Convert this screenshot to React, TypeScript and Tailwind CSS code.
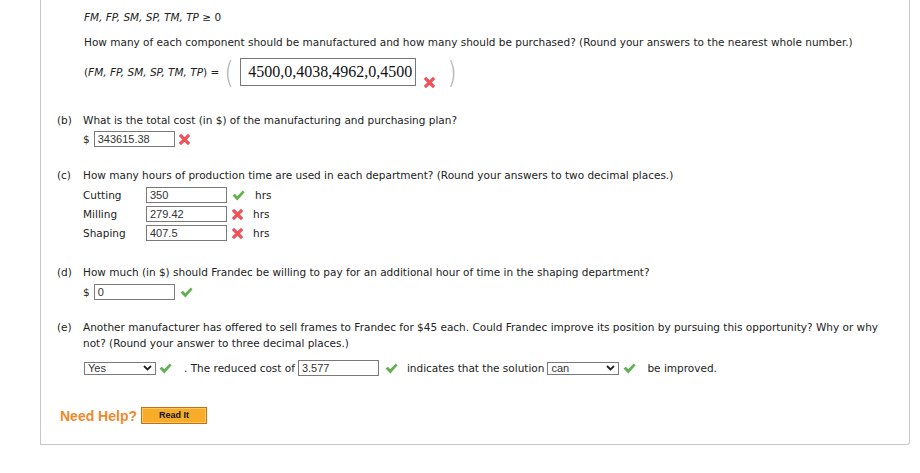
import React from "react";

const Check = () => (
    <svg width="13" height="11" viewBox="0 0 13 11" className="shrink-0">
        <path d="M0.5 5.6 L3 3.8 L5.2 6.2 L10.8 0.5 L12.6 2.2 L5.4 10.4 Z" fill="#62b04e" />
    </svg>
);

const Cross = () => (
    <svg width="11" height="11" viewBox="0 0 11 11" className="shrink-0">
        <path d="M2 2 L9 9 M9 2 L2 9" stroke="#f0525a" strokeWidth="3.2" strokeLinecap="square" />
    </svg>
);

const Field = ({ value, w = "w-[81px]" }: { value: string; w?: string }) => (
    <div className={`${w} h-[16px] border border-[#7a7a7a] bg-white px-[3px] text-[11px] leading-[14px] text-[#333] font-['Liberation_Sans',Arial,sans-serif]`}>
        {value}
    </div>
);

const Select = ({ value, w }: { value: string; w: string }) => (
    <div className={`${w} h-[13px] border border-[#7a7a7a] bg-white flex items-center justify-between pl-[3px] pr-[3px] text-[11px] leading-[11px] text-[#333] font-['Liberation_Sans',Arial,sans-serif]`}>
        <span>{value}</span>
        <svg width="9" height="6" viewBox="0 0 9 6">
            <path d="M1 1 L4.5 4.5 L8 1" stroke="#222" strokeWidth="1.8" fill="none" />
        </svg>
    </div>
);

const Part = ({ label, children }: { label: string; children: React.ReactNode }) => (
    <div className="flex">
        <div className="w-[26px] shrink-0">{label}</div>
        <div>{children}</div>
    </div>
);

export default function App() {
    return (
        <div className="w-[920px] h-[473px] bg-white pl-[40px] pr-[10px] font-['DejaVu_Sans',Verdana,sans-serif] text-[10.5px] leading-[16px] text-[#222]">
            <div className="h-[445px] border-l border-r border-b border-[#c8c8c8] rounded-br-[3px] pl-[16px] flex flex-col">
                <div className="pl-[27px] pt-[9px]">
                    <span className="italic">FM, FP, SM, SP, TM, TP</span> ≥ 0
                </div>
                <div className="pl-[27px] mt-[9px]">
                    How many of each component should be manufactured and how many should be purchased? (Round your answers to the nearest whole number.)
                </div>
                <div className="pl-[27px] mt-[7px] flex items-center h-[30px]">
                    <span>
                        (<span className="italic">FM, FP, SM, SP, TM, TP</span>) =
                    </span>
                    <span className="ml-[4px] text-[31px] leading-[30px] text-[#aaa] font-['DejaVu_Sans',sans-serif] font-extralight scale-x-75">(</span>
                    <div className="ml-[5px] w-[176px] h-[28px] border border-[#777] flex items-center pl-[7px] text-[16px] font-['Liberation_Serif',serif] text-[#111]">
                        4500,0,4038,4962,0,4500
                    </div>
                    <div className="ml-[8px] mt-[20px]">
                        <Cross />
                    </div>
                    <span className="ml-[11px] text-[31px] leading-[30px] text-[#aaa] font-['DejaVu_Sans',sans-serif] font-extralight scale-x-75">)</span>
                </div>

                <div className="mt-[25px]">
                    <Part label="(b)">
                        What is the total cost (in $) of the manufacturing and purchasing plan?
                        <div className="flex items-center gap-[4px] mt-[3px]">
                            <span>$</span>
                            <Field value="343615.38" />
                            <Cross />
                        </div>
                    </Part>
                </div>

                <div className="mt-[20px]">
                    <Part label="(c)">
                        How many hours of production time are used in each department? (Round your answers to two decimal places.)
                        <div className="grid grid-cols-[63px_81px_24px_auto] items-center gap-y-[3px] mt-[4px]">
                            <span>Cutting</span>
                            <Field value="350" />
                            <div className="pl-[5px]"><Check /></div>
                            <span className="pl-[4px]">hrs</span>
                            <span>Milling</span>
                            <Field value="279.42" />
                            <div className="pl-[5px]"><Cross /></div>
                            <span className="pl-[2px]">hrs</span>
                            <span>Shaping</span>
                            <Field value="407.5" />
                            <div className="pl-[5px]"><Cross /></div>
                            <span className="pl-[2px]">hrs</span>
                        </div>
                    </Part>
                </div>

                <div className="mt-[23px]">
                    <Part label="(d)">
                        How much (in $) should Frandec be willing to pay for an additional hour of time in the shaping department?
                        <div className="flex items-center gap-[4px] mt-[4px]">
                            <span>$</span>
                            <Field value="0" />
                            <div className="pl-[1px]"><Check /></div>
                        </div>
                    </Part>
                </div>

                <div className="mt-[19px]">
                    <Part label="(e)">
                        <div className="w-[800px]">
                            Another manufacturer has offered to sell frames to Frandec for $45 each. Could Frandec improve its position by pursuing this opportunity? Why or why not? (Round your answer to three decimal places.)
                        </div>
                        <div className="flex items-center mt-[9px] h-[16px]">
                            <div className="ml-[1px]"><Select value="Yes" w="w-[72px]" /></div>
                            <div className="ml-[3px]"><Check /></div>
                            <span className="ml-[12px]">. The reduced cost of</span>
                            <div className="ml-[3px]"><Field value="3.577" /></div>
                            <div className="ml-[6px]"><Check /></div>
                            <span className="ml-[9px]">indicates that the solution</span>
                            <div className="ml-[3px]"><Select value="can" w="w-[72px]" /></div>
                            <div className="ml-[4px]"><Check /></div>
                            <span className="ml-[11px]">be improved.</span>
                        </div>
                    </Part>
                </div>

                <div className="mt-[31px] pl-[3px] flex items-center">
                    <span className="text-[14px] font-bold text-[#f0892b] font-['Liberation_Sans',Arial,sans-serif]">Need Help?</span>
                    <button className="ml-[4px] w-[66px] h-[17px] border border-[#c86f12] bg-[#f8ad2a] shadow-[inset_0_0_0_1px_#fcc866] text-[9px] leading-[15px] font-bold text-[#111] font-['Liberation_Sans',Arial,sans-serif]">
                        Read It
                    </button>
                </div>
            </div>
        </div>
    );
}
